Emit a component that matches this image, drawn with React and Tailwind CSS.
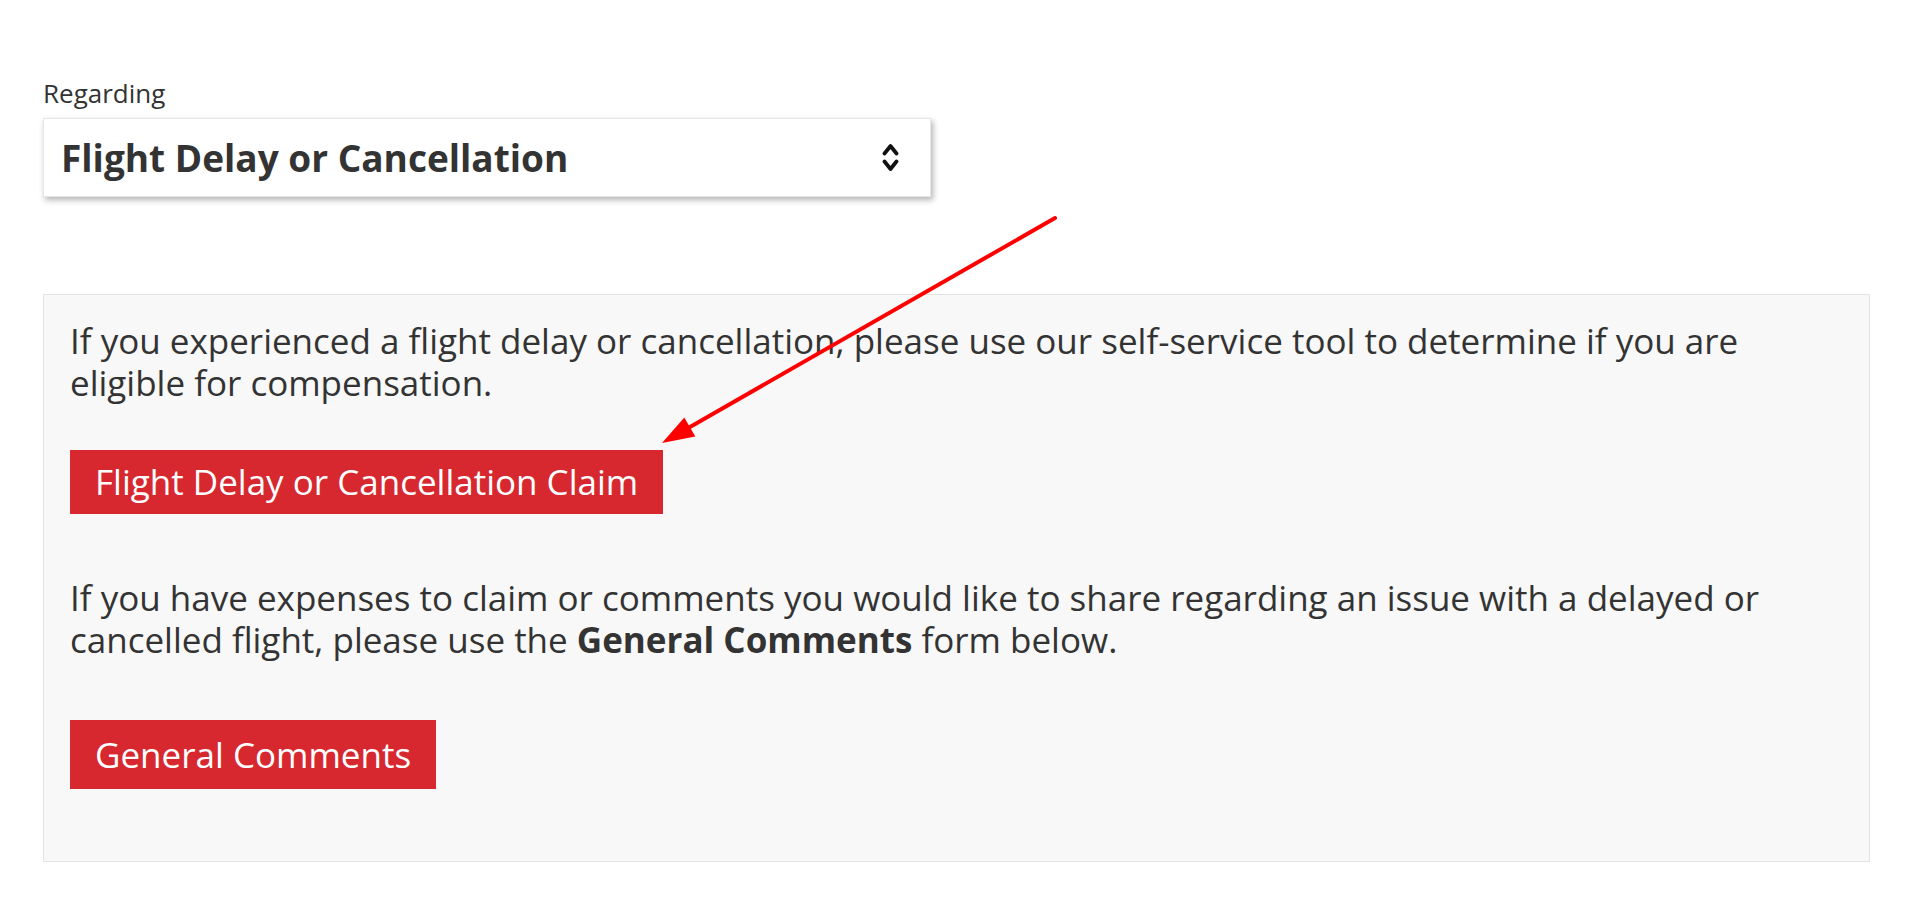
import React from 'react';

const buttonClasses =
  'flex items-center bg-[#d7282f] px-[25px] text-[35px] leading-[42px] text-white';

const SortIcon = () => (
  <svg width="17" height="29" viewBox="0 0 17 29" fill="none" stroke="#111" strokeWidth="3.8" strokeLinecap="round" strokeLinejoin="round">
    <path d="M2.5 10.5 L8.5 3 L14.5 10.5" />
    <path d="M2.5 18.5 L8.5 26 L14.5 18.5" />
  </svg>
);

// red annotation arrow drawn over the page
const Arrow = () => (
  <svg className="pointer-events-none absolute left-0 top-0" width="1920" height="918">
    <line x1="1055" y1="218" x2="690" y2="427" stroke="#ff0000" strokeWidth="4" strokeLinecap="round" />
    <polygon points="662,443 684.3,417.6 695.3,436.6" fill="#ff0000" />
  </svg>
);

export default function App() {
  return (
    <div className="relative min-h-[918px] bg-white font-['Open_Sans',sans-serif] text-[#333]">
      <div className="pl-[43px] pr-[50px] pt-[77px]">
        <label className="block text-[26px] leading-[32px]">Regarding</label>

        <div className="mt-[9px] flex h-[79px] w-[888px] items-center justify-between border border-[#e6e6e6] bg-white pl-[17px] pr-[31px] shadow-[2px_3px_6px_rgba(0,0,0,0.3)]">
          <span className="text-[37px] font-bold leading-[44px]">Flight Delay or Cancellation</span>
          <SortIcon />
        </div>

        <div className="mt-[97px] w-[1827px] border border-[#e3e3e3] bg-[#f8f8f8] pb-[72px] pl-[26px] pr-[40px] pt-[25px] text-[35px] leading-[42px]">
          <p>
            If you experienced a flight delay or cancellation, please use our self-service tool to determine if you are
            eligible for compensation.
          </p>

          <button type="button" className={`${buttonClasses} mt-[46px] h-[64px]`}>
            Flight Delay or Cancellation Claim
          </button>

          <p className="mt-[63px]">
            If you have expenses to claim or comments you would like to share regarding an issue with a delayed or
            cancelled flight, please use the <span className="font-bold">General Comments</span> form below.
          </p>

          <button type="button" className={`${buttonClasses} mt-[59px] h-[69px]`}>
            General Comments
          </button>
        </div>
      </div>

      <Arrow />
    </div>
  );
}
